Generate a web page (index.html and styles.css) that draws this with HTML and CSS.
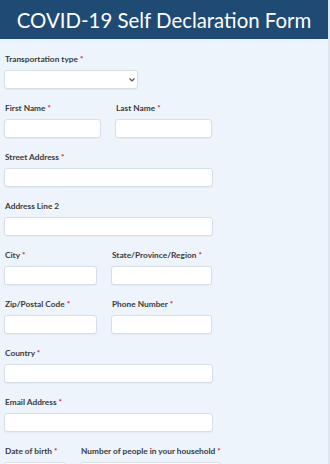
FILE: index.html
```html
<!DOCTYPE html>
<html lang="en">
<head>
  <meta charset="UTF-8" />
  <meta name="viewport" content="width=device-width, initial-scale=1.0"/>
  <title>COVID-19 Self Declaration Form</title>
  <link rel="stylesheet" href="styles.css">
</head>
<body>
  <header class="top">
    <h1>COVID-19 Self Declaration Form</h1>
  </header>

  <form class="decl" onsubmit="event.preventDefault()">
    <div class="row row-select">
      <div class="field">
        <label>Transportation type <span class="req">*</span></label>
        <div class="select-wrap">
          <select><option></option></select>
          <svg class="chev" width="6" height="4" viewBox="0 0 6 4"><path d="M0.5 0.5 L3 3 L5.5 0.5" fill="none" stroke="#555" stroke-width="1.2"/></svg>
        </div>
      </div>
    </div>

    <div class="row row-names">
      <div class="field">
        <label>First Name <span class="req">*</span></label>
        <input type="text" />
      </div>
      <div class="field">
        <label>Last Name <span class="req">*</span></label>
        <input type="text" />
      </div>
    </div>

    <div class="row">
      <div class="field">
        <label>Street Address <span class="req">*</span></label>
        <input type="text" />
      </div>
    </div>

    <div class="row">
      <div class="field">
        <label>Address Line 2</label>
        <input type="text" />
      </div>
    </div>

    <div class="row row-split">
      <div class="field">
        <label>City <span class="req">*</span></label>
        <input type="text" />
      </div>
      <div class="field">
        <label>State/Province/Region <span class="req">*</span></label>
        <input type="text" />
      </div>
    </div>

    <div class="row row-split">
      <div class="field">
        <label>Zip/Postal Code <span class="req">*</span></label>
        <input type="text" />
      </div>
      <div class="field">
        <label>Phone Number <span class="req">*</span></label>
        <input type="tel" />
      </div>
    </div>

    <div class="row">
      <div class="field">
        <label>Country <span class="req">*</span></label>
        <input type="text" />
      </div>
    </div>

    <div class="row">
      <div class="field">
        <label>Email Address <span class="req">*</span></label>
        <input type="email" />
      </div>
    </div>

    <div class="row row-dob">
      <div class="field">
        <label>Date of birth <span class="req">*</span></label>
        <input type="text" />
      </div>
      <div class="field">
        <label>Number of people in your household <span class="req">*</span></label>
        <input type="number" />
      </div>
    </div>
  </form>
</body>
</html>
```

FILE: styles.css
```css
body {
  margin: 0;
  background: #eef4fc;
  font-family: 'Lato', 'Liberation Sans', sans-serif;
  color: #333;
  border-right: 2px solid #dfe6ef;
}

/* Header bar */
.top {
  background: #1f4a73;
  height: 39px;
  display: flex;
  align-items: center;
  justify-content: center;
}

.top h1 {
  margin: 0;
  color: #fff;
  font-weight: 400;
  font-size: 20.4px;
  white-space: nowrap;
}

.decl {
  padding: 14px 0 0 4px;
  width: 209px;
}

.row {
  display: grid;
  grid-template-columns: 1fr;
  column-gap: 14px;
  margin-bottom: 13px;
}

.row-select { grid-template-columns: 134px; }
.row-names { grid-template-columns: 97px 97px; }
.row-split { grid-template-columns: 93px 101px; }
.row-dob { grid-template-columns: 62px 1fr; }

.field label {
  display: block;
  font-size: 8.3px;
  font-weight: 700;
  line-height: 12px;
  margin-bottom: 5px;
  padding-left: 1px;
  color: #3a3a3a;
  white-space: nowrap;
}

.req {
  color: #d0202a;
  font-size: 8px;
}

input, select {
  display: block;
  box-sizing: border-box;
  width: 100%;
  height: 19px;
  margin: 0;
  background: #fff;
  border: 1px solid #d6dee8;
  border-radius: 3px;
  box-shadow: 0 1px 1px rgba(0, 0, 0, 0.04);
  font-family: 'Lato', sans-serif;
  font-size: 9px;
}

select {
  appearance: none;
  -webkit-appearance: none;
}

.select-wrap {
  position: relative;
}

.chev {
  position: absolute;
  right: 3px;
  top: 8px;
}
```
